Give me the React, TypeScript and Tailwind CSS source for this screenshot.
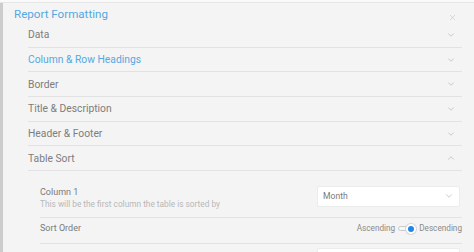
import { ChevronDown, ChevronUp, X } from 'lucide-react'

const sections = [
  { label: 'Data', active: false },
  { label: 'Column & Row Headings', active: true },
  { label: 'Border', active: false },
  { label: 'Title & Description', active: false },
  { label: 'Header & Footer', active: false },
  { label: 'Table Sort', active: false, open: true },
]

function Toggle() {
  return (
    <span className="relative inline-flex items-center w-[18px] h-[10px] mx-[3px]">
      <span className="absolute left-0 right-[4px] h-[5px] rounded-full border border-[#c9c9c9] bg-[#f7f7f7]" />
      <span className="absolute right-0 w-[10px] h-[10px] rounded-full bg-[#1e88e5] border-[2px] border-white shadow-[0_0_0_1px_#d5d5d5]" />
    </span>
  )
}

export default function App() {
  return (
    <div
      className="w-[474px] h-[252px] overflow-hidden bg-[#fafafa] text-[#7d7d7d]"
      style={{ fontFamily: 'Roboto, "Liberation Sans", sans-serif' }}
    >
      <div className="mt-[2px] h-[250px] flex border-t border-[#e6e6e6] bg-[#f4f4f4]">
        <div className="w-[3px] bg-[#cccccc]" />
        <div className="flex-1">
          <div className="h-[20px] pl-[11px] pr-[17px] flex items-center justify-between">
            <span className="text-[11.6px] text-[#55a8e2] leading-none mt-[4px]">Report Formatting</span>
            <X size={9} strokeWidth={1.4} className="text-[#c0c0c0] mt-[8px]" />
          </div>
          <div className="ml-[25px] mr-[12px]">
            {sections.map((s) => (
              <div
                key={s.label}
                className="h-[24.7px] flex items-center justify-between border-b border-[#e2e2e2] pr-[6px]"
              >
                <span className={`text-[10.3px] ${s.active ? 'text-[#55a8e2]' : 'text-[#7d7d7d]'}`}>{s.label}</span>
                {s.open ? (
                  <ChevronUp size={10} strokeWidth={1.5} className="text-[#aeaeae]" />
                ) : (
                  <ChevronDown size={10} strokeWidth={1.5} className="text-[#aeaeae]" />
                )}
              </div>
            ))}
            <div className="ml-[12px]">
              <div className="h-[47px] flex items-center justify-between border-b border-[#e2e2e2] pt-[8px]">
                <div className="flex flex-col">
                  <span className="text-[9px] text-[#7a7a7a] leading-[13px]">Column 1</span>
                  <span className="text-[8.3px] text-[#b8b8b8] leading-[11px]">
                    This will be the first column the table is sorted by
                  </span>
                </div>
                <div className="w-[143px] h-[21px] mr-[2px] -mt-[4px] bg-white rounded-[2px] border border-[#ececec] flex items-center justify-between pl-[5px] pr-[5px]">
                  <span className="text-[8.6px] text-[#7a7a7a]">Month</span>
                  <ChevronDown size={10} strokeWidth={1.5} className="text-[#a8a8a8]" />
                </div>
              </div>
              <div className="h-[26px] flex items-center justify-between border-b border-[#e2e2e2] pb-[4px]">
                <span className="text-[9px] text-[#7a7a7a]">Sort Order</span>
                <div className="flex items-center text-[8.2px] text-[#8a8a8a]">
                  <span>Ascending</span>
                  <Toggle />
                  <span>Descending</span>
                </div>
              </div>
              <div className="h-[20px] flex justify-end pt-[4px]">
                <div className="w-[143px] h-[21px] mr-[2px] bg-white rounded-[2px] border border-[#ececec]" />
              </div>
            </div>
          </div>
        </div>
      </div>
    </div>
  )
}
